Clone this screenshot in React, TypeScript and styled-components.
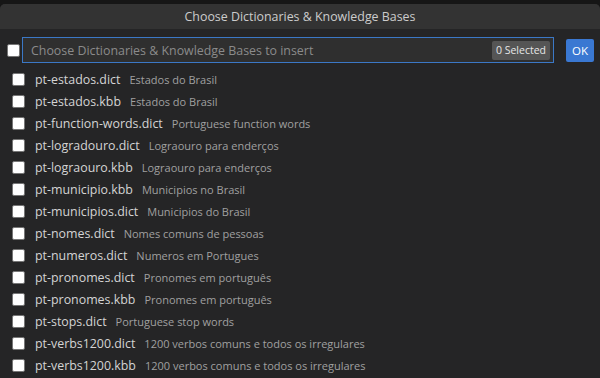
import React from "react";
import styled, { createGlobalStyle } from "styled-components";

const GlobalStyle = createGlobalStyle`
  html, body {
    margin: 0;
    padding: 0;
    background: #161616;
    font-family: "Open Sans", "Noto Sans", sans-serif;
    overflow: hidden;
  }
`;

const items = [
  { name: "pt-estados.dict", desc: "Estados do Brasil" },
  { name: "pt-estados.kbb", desc: "Estados do Brasil" },
  { name: "pt-function-words.dict", desc: "Portuguese function words" },
  { name: "pt-logradouro.dict", desc: "Lograouro para enderços" },
  { name: "pt-lograouro.kbb", desc: "Lograouro para enderços" },
  { name: "pt-municipio.kbb", desc: "Municipios no Brasil" },
  { name: "pt-municipios.dict", desc: "Municipios do Brasil" },
  { name: "pt-nomes.dict", desc: "Nomes comuns de pessoas" },
  { name: "pt-numeros.dict", desc: "Numeros em Portugues" },
  { name: "pt-pronomes.dict", desc: "Pronomes em português" },
  { name: "pt-pronomes.kbb", desc: "Pronomes em português" },
  { name: "pt-stops.dict", desc: "Portuguese stop words" },
  { name: "pt-verbs1200.dict", desc: "1200 verbos comuns e todos os irregulares" },
  { name: "pt-verbs1200.kbb", desc: "1200 verbos comuns e todos os irregulares" },
];

const Panel = styled.div`
  margin-top: 4px;
  height: 374px;
  background: #252526;
  border-radius: 5px 5px 0 0;
  overflow: hidden;
`;

const TitleBar = styled.div`
  height: 25px;
  background: #333333;
  color: #cccccc;
  font-size: 12.4px;
  display: flex;
  align-items: center;
  justify-content: center;
`;

const HeaderRow = styled.div`
  display: flex;
  align-items: center;
  padding: 8px 6px 5px 7px;
`;

const Box = styled.span`
  flex: none;
  width: 11px;
  height: 11px;
  background: #ffffff;
  border: 1px solid #767676;
  border-radius: 2px;
`;

const InputBox = styled.div`
  flex: 1;
  height: 24px;
  margin-left: 2px;
  border: 1px solid #3b78c6;
  background: #2f2f2f;
  display: flex;
  align-items: center;
  padding: 0 3px 0 8px;
`;

const Placeholder = styled.span`
  flex: 1;
  color: #8b8b8b;
  font-size: 12.4px;
`;

const Badge = styled.span`
  background: #555555;
  color: #e6e6e6;
  font-size: 10.5px;
  padding: 2px 4px;
  border-radius: 2px;
  line-height: 15px;
`;

const OkButton = styled.button`
  margin-left: 12px;
  width: 28px;
  height: 23px;
  border: none;
  border-radius: 2px;
  background: #3a78d2;
  color: #ffffff;
  font-family: inherit;
  font-size: 11.5px;
  padding: 0;
`;

const List = styled.div`
  display: flex;
  flex-direction: column;
`;

const Row = styled.div`
  display: flex;
  align-items: center;
  height: 22px;
  padding-left: 12px;
`;

const Name = styled.span`
  margin-left: 10px;
  color: #d4d4d4;
  font-size: 12.4px;
`;

const Desc = styled.span`
  margin-left: 9px;
  color: #a0a0a0;
  font-size: 11px;
`;

export default function App() {
  return (
    <>
      <GlobalStyle />
      <Panel>
        <TitleBar>Choose Dictionaries &amp; Knowledge Bases</TitleBar>
        <HeaderRow>
          <Box />
          <InputBox>
            <Placeholder>Choose Dictionaries &amp; Knowledge Bases to insert</Placeholder>
            <Badge>0 Selected</Badge>
          </InputBox>
          <OkButton>OK</OkButton>
        </HeaderRow>
        <List>
          {items.map((it) => (
            <Row key={it.name}>
              <Box />
              <Name>{it.name}</Name>
              <Desc>{it.desc}</Desc>
            </Row>
          ))}
        </List>
      </Panel>
    </>
  );
}
